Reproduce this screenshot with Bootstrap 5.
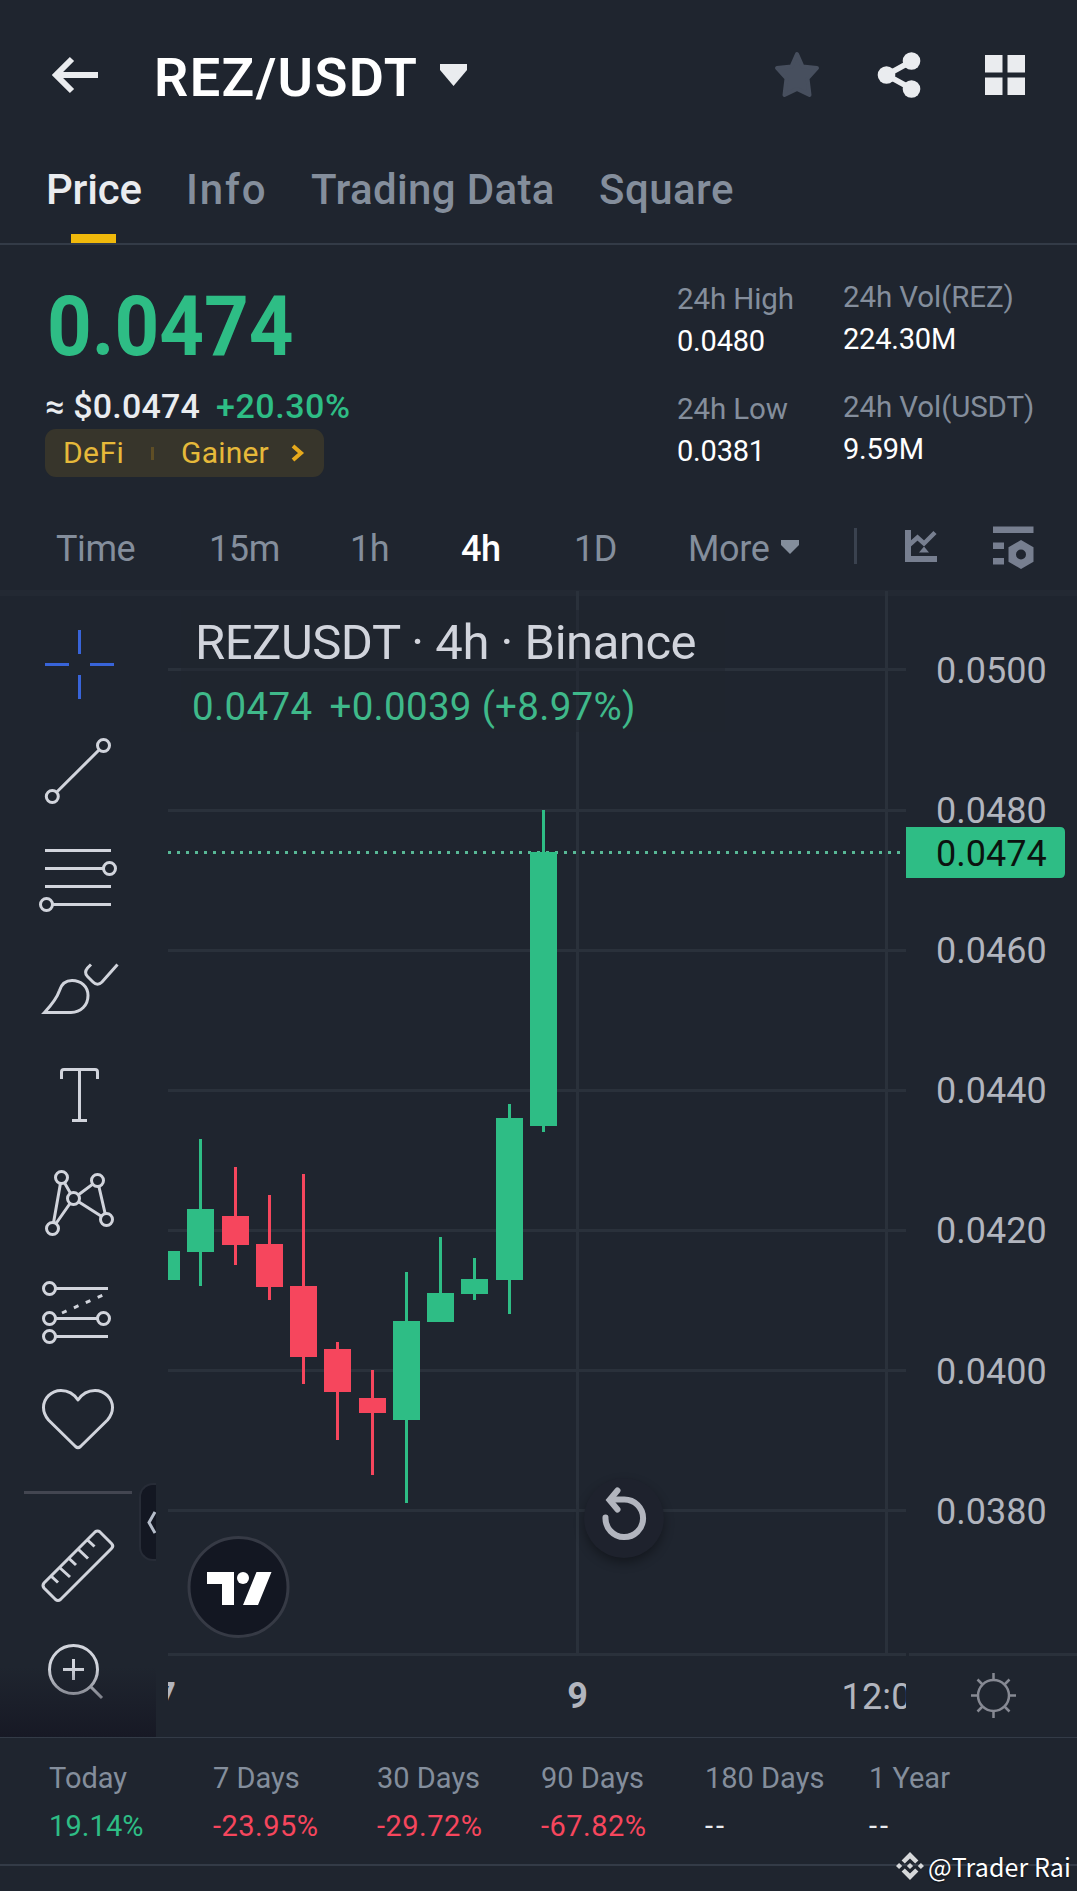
<!DOCTYPE html>
<html lang="en" data-bs-theme="dark">
<head>
<meta charset="utf-8">
<meta name="viewport" content="width=device-width, initial-scale=1">
<title>REZ/USDT</title>
<link href="https://cdn.jsdelivr.net/npm/bootstrap@5.3.0/dist/css/bootstrap.min.css" rel="stylesheet">
<style>
:root{--bg:#1f252f;--muted:#848e9c;--text:#eaecef;--up:#2ebd85;--down:#f6465d;--gold:#f0b90b;--rule:#333b47}
body{background:var(--bg);color:var(--text);font-family:Roboto,"Open Sans",sans-serif;width:1077px;height:1891px;overflow:hidden}
svg{display:block;flex:none}
.up{color:var(--up)}.down{color:var(--down)}.dim{color:var(--muted)}
.topbar{height:150px;padding-left:52px;padding-right:52px}
.pair{font-size:54px;font-weight:600;letter-spacing:1.4px;line-height:60px;margin:5px 0 0 6px;padding-left:49px;color:#fff}
.tabs-row{height:95px;padding-left:46px;border-bottom:2px solid var(--rule)}
.tabs-row .nav-link{font-size:42px;font-weight:500;line-height:50px;padding:15px 0 0;color:var(--muted);position:relative}
.tabs-row .nav-link.active{color:var(--text)}
.tabs-row .nav-link.active::after{content:"";position:absolute;left:25px;bottom:0;width:45px;height:9px;background:var(--gold)}
.summary{height:260px;padding-left:45px}
.last-col{width:630px;padding-top:40px}
.last-price{font-size:83px;font-weight:700;line-height:84px;transform:scaleX(.94);transform-origin:left;margin-left:2px}
.fiat-row{font-size:34px;font-weight:500;line-height:40px;margin-top:17px}
.tag-pill{width:279px;height:48px;border-radius:11px;background:#37352b;color:#e6b93a;font-size:30px;line-height:50px;margin-top:3px;padding-left:18px}
.tag-pill i{width:3px;height:13px;background:#5f4e25;margin:0 27px 0 27px}
.stat{font-size:29px}
.stat dt{font-size:29.5px;font-weight:400;line-height:40px;color:var(--muted);letter-spacing:-.1px}
.stat dd{line-height:45px;margin:0 0 25px;color:#fff;letter-spacing:-.2px}
.frames{height:91px;padding:3px 0 0 56px;border-bottom:6px solid #232933;font-size:36px;line-height:44px;color:var(--muted);letter-spacing:-.4px}
.frames span{flex:none}
.workspace{height:1141px}
.tools{width:156px;flex:none}
.fade-end{left:0;bottom:0;width:156px;height:70px;background:linear-gradient(rgba(23,25,37,0),#171925)}
.handle{left:139px;top:887px;width:17px;height:78px;background:#131722;border:2px solid #272c37;border-right:0;border-radius:14px 0 0 14px}
.periods{height:129px;border-top:1px solid var(--rule);border-bottom:2px solid var(--rule);padding:20px 0 0 49px;font-size:29px;line-height:40px}
.periods>div{width:164px;flex:none}
.periods .val{margin-top:8px;letter-spacing:.5px}
.credit{right:6px;bottom:11px;color:#fff;font:400 25px/28px "Noto Sans CJK SC","Open Sans",sans-serif;letter-spacing:.1px;text-shadow:0 1px 2px rgba(0,0,0,.6)}
.ln{fill:none;stroke:#d1d4dc;stroke-width:3}
.nd{fill:var(--bg);stroke:#d1d4dc;stroke-width:3}
</style>
</head>
<body>
<header class="topbar d-flex align-items-center">
  <svg width="47" height="38" viewBox="0 0 47 38"><path d="M20 3 4 19l16 16M4 19h42" fill="none" stroke="#eaecef" stroke-width="6"/></svg>
  <h1 class="pair mb-0">REZ/USDT</h1>
  <svg style="margin-left:22px" width="28" height="22" viewBox="0 0 28 22"><path d="M0 0h27v6L13.500 22 0 6z" fill="#eaecef"/></svg>
  <div class="d-flex align-items-center ms-auto">
    <svg width="46" height="48" viewBox="0 0 46 48"><path d="M23 3l5.500 12.500 14.500 1.500-9.500 10.500 2 16.500L23 38l-12.500 6 2-16.500L3 17l14.500-1.500z" fill="#474f5e" stroke="#474f5e" stroke-width="4" stroke-linejoin="round"/></svg>
    <svg style="margin-left:57px" width="44" height="46" viewBox="0 0 44 46"><path d="M35 9 9.500 23 35 37" fill="none" stroke="#eaecef" stroke-width="5.500"/><g fill="#eaecef"><circle cx="34.500" cy="9" r="8.800"/><circle cx="9.500" cy="23" r="8.800"/><circle cx="34.500" cy="37" r="8.800"/></g></svg>
    <svg style="margin-left:64px" width="40" height="40" viewBox="0 0 40 40"><path d="M0 0h17.500v17.500H0zM22.500 0H40v17.500H22.500zM0 22.500h17.500V40H0zM22.500 22.500H40V40H22.500z" fill="#eaecef"/></svg>
  </div>
</header>

<nav class="tabs-row nav flex-nowrap">
  <a class="nav-link active" style="width:140px;letter-spacing:-.200px">Price</a>
  <a class="nav-link" style="width:125px;letter-spacing:1.900px">Info</a>
  <a class="nav-link" style="width:288px;letter-spacing:.350px">Trading Data</a>
  <a class="nav-link" style="letter-spacing:.470px">Square</a>
</nav>

<section class="summary d-flex">
  <div class="last-col">
    <div class="last-price up">0.0474</div>
    <div class="fiat-row d-flex"><span style="width:171px;letter-spacing:.200px">≈ $0.0474</span><span class="up" style="letter-spacing:.550px">+20.30%</span></div>
    <div class="tag-pill d-flex align-items-center"><span style="letter-spacing:.400px">DeFi</span><i></i><span style="letter-spacing:.200px">Gainer</span>
      <svg style="margin-left:22px" width="14" height="18" viewBox="0 0 14 18"><path d="M2 2l8 7-8 7" fill="none" stroke="#e6a91c" stroke-width="4"/></svg></div>
  </div>
  <dl class="stat mb-0" style="width:166px;margin-left:2px;padding-top:34px">
    <dt>24h High</dt><dd>0.0480</dd><dt>24h Low</dt><dd>0.0381</dd>
  </dl>
  <dl class="stat mb-0" style="padding-top:32px">
    <dt>24h Vol(REZ)</dt><dd>224.30M</dd><dt>24h Vol(USDT)</dt><dd>9.59M</dd>
  </dl>
</section>

<nav class="frames d-flex align-items-center">
  <span style="width:153px">Time</span><span style="width:141px">15m</span><span style="width:111px">1h</span>
  <span style="width:113px;color:#fff;font-weight:500">4h</span><span style="width:114px">1D</span><span style="width:93px">More</span>
  <svg style="margin-top:-5px" width="18" height="14" viewBox="0 0 18 14"><path d="M0 0h18v5L9 14 0 5z" fill="#848e9c"/></svg>
  <svg style="margin-top:-6px" width="260" height="46" viewBox="799 523 260 46"><path d="M855.500 528v36" stroke="#3a424f" stroke-width="3"/>
    <g fill="#777f90"><path d="M905 530h6v26h26v6h-32zM919 552.500h10l-5-6z"/><path d="M908 546l9.500-8.500 6.500 6 11-11" fill="none" stroke="#777f90" stroke-width="4.500"/>
    <path d="M993 526.500h40.500v6.500H993zM993 542.500h11v6.500h-11zM993 558h11v6.500h-11z"/><path fill-rule="evenodd" d="M1021 540l12.500 7.200v14.600L1021 569l-12.500-7.200v-14.600zM1021 549.500a5 5 0 1 0 0 10 5 5 0 0 0 0-10z"/></g></svg>
</nav>

<main class="workspace d-flex position-relative">
  <aside class="tools d-flex flex-column">
    <svg width="156" height="122" viewBox="0 596 156 122"><path d="M79.500 630v24M79.500 675v24M45 664.500h24M90 664.500h24" stroke="#3864d9" stroke-width="3"/></svg>
    <svg width="156" height="106" viewBox="0 718 156 106"><path class="ln" d="M52.300 796.500l51.200-51"/><circle class="nd" cx="103.500" cy="745.500" r="6"/><circle class="nd" cx="52.300" cy="796.500" r="6"/></svg>
    <svg width="156" height="108" viewBox="0 824 156 108"><path class="ln" d="M45 850.500h66M45 868.500h60M45 886.500h66M48 904.500h63"/><circle class="nd" cx="109.500" cy="868.500" r="6"/><circle class="nd" cx="46.500" cy="904.500" r="6"/></svg>
    <svg width="156" height="108" viewBox="0 932 156 108"><path class="ln" d="M44.500 1012.500H71c10 0 17-7.500 17-17 0-9-7-15-16-15-7 0-11 5-12.500 10-2.500 7.500-9 15.500-15 22zM91 964.500l-3.500 3.500c-2.500 3-2.500 6 0 8.500l5.500 5.500c3 3 6 3 9 0l15.500-17.500"/></svg>
    <svg width="156" height="108" viewBox="0 1040 156 108"><path class="ln" d="M61.500 1079v-7q0-2.500 2.500-2.500h31q2.500 0 2.500 2.500v7M79.500 1069.500v51M72 1120.500h15"/></svg>
    <svg width="156" height="108" viewBox="0 1148 156 108"><path class="ln" d="M52.500 1228.500l9-51 12 21 24-18 9 39-33-21z"/><circle class="nd" cx="61.500" cy="1177.500" r="6"/><circle class="nd" cx="97.500" cy="1180.500" r="6"/><circle class="nd" cx="73.500" cy="1198.500" r="6"/><circle class="nd" cx="106.500" cy="1219.500" r="6"/><circle class="nd" cx="52.500" cy="1228.500" r="6"/></svg>
    <svg width="156" height="108" viewBox="0 1256 156 108"><path class="ln" d="M50 1288.500h58M50 1318.500h54M50 1336.500h58"/><path class="ln" d="M62 1313l42-18.500" stroke-dasharray="5 8"/><circle class="nd" cx="49.500" cy="1288.500" r="6"/><circle class="nd" cx="49.500" cy="1318.500" r="6"/><circle class="nd" cx="103.500" cy="1318.500" r="6"/><circle class="nd" cx="49.500" cy="1336.500" r="6"/></svg>
    <svg width="156" height="108" viewBox="0 1364 156 108"><path class="ln" stroke-linejoin="round" d="M78 1400c-4-6-10-9.500-17-9.500-10 0-17.500 8-17.500 17 0 6 2 9 5 12.500l27 26.500q2.500 2.200 5 0l27-26.500c3-3.500 5-6.500 5-12.500 0-9-7.500-17-17.500-17-7 0-13 3.500-17 9.500z"/></svg>
    <svg width="156" height="41" viewBox="0 1472 156 41"><path d="M24 1492.500h108" stroke="#434651" stroke-width="3"/></svg>
    <svg width="156" height="106" viewBox="0.500 1513 156 106"><path class="ln" d="M95.500 1532q2.500-2 5 0l11.500 11.500q2.500 2.500 0 5l-51 51q-2.500 2-5 0l-11.500-11.500q-2-2.500 0-5zM51.500 1576l7 6.500M60 1567.500l10.500 9.500M69 1558l7.500 7M78.500 1549l10 9.500M88 1540l7 6.500"/></svg>
    <svg width="156" height="118" viewBox="0 1619 156 118"><path class="ln" d="M63 1669.500h21M73.500 1659v21M91 1687l11 11"/><circle class="ln" cx="73.500" cy="1669.500" r="24"/></svg>
  </aside>
  <div class="fade-end position-absolute"></div>
  <div class="handle position-absolute"><svg width="15" height="74" viewBox="0 0 15 74"><path d="M14 27l-6 10.500 6 10.500" fill="none" stroke="#b5bdca" stroke-width="3"/></svg></div>

  <svg class="overflow-visible" width="921" height="1141" viewBox="156 596 921 1141" font-family="Roboto, sans-serif">
    <defs><clipPath id="plot"><rect x="168" y="596" width="738" height="1141"/></clipPath>
    <filter id="soft" x="-50%" y="-50%" width="200%" height="200%"><feGaussianBlur stdDeviation="6"/></filter></defs>
    <g stroke="#2a313b" stroke-width="3">
      <path d="M577.500 591v1063M886.500 591v1063M168 669.500h738M168 810.500h738M168 950.500h738M168 1090.500h738M168 1230.500h738M168 1370.500h738M168 1510.500h738M168 1654.500h738M909 1654.500h168"/>
    </g>
    <rect x="181" y="610" width="544" height="122" fill="#1f252f" opacity=".45"/>
    <path d="M168 852.500h738" stroke="#58b896" stroke-width="3" stroke-dasharray="3 6"/>
    <g clip-path="url(#plot)">
      <g fill="#2ebd85">
        <path d="M153 1251h27v29h-27zM187 1209h27v43h-27zM393 1321h27v99h-27zM427 1293h27v29h-27zM461 1279h27v15h-27zM496 1118h27v162h-27zM530 852h27v274h-27z"/>
        <path d="M199 1139h3v147h-3zM405 1272h3v231h-3zM439 1237h3v60h-3zM473 1258h3v42h-3zM508 1104h3v210h-3zM542 810h3v322h-3z"/>
      </g>
      <g fill="#f6465d">
        <path d="M222 1216h27v29h-27zM256 1244h27v43h-27zM290 1286h27v71h-27zM324 1349h27v43h-27zM359 1398h27v15h-27z"/>
        <path d="M234 1167h3v98h-3zM268 1195h3v105h-3zM302 1174h3v210h-3zM336 1342h3v98h-3zM371 1370h3v105h-3z"/>
      </g>
      <g fill="#b2b5be" font-size="36">
        <text x="165.500" y="1708" text-anchor="middle" font-weight="700">7</text>
        <text x="577.500" y="1708" text-anchor="middle" font-weight="700">9</text>
        <text x="841.500" y="1708.500" letter-spacing=".2">12:00</text>
      </g>
    </g>
    <text x="195" y="659" font-size="49" letter-spacing="-.48" fill="#d1d4dc">REZUSDT · 4h · Binance</text>
    <g font-size="38.500" fill="#3fb98a"><text x="192" y="719.500" letter-spacing=".36">0.0474</text><text x="329.500" y="719.500" letter-spacing=".3">+0.0039 (+8.97%)</text></g>
    <g font-size="36" fill="#b2b5be">
      <text x="936" y="683">0.0500</text><text x="936" y="823">0.0480</text><text x="936" y="963">0.0460</text><text x="936" y="1103">0.0440</text><text x="936" y="1243">0.0420</text><text x="936" y="1383.500">0.0400</text><text x="936" y="1523.500">0.0380</text>
      <path d="M906 827h154q5 0 5 5v41q0 5-5 5H906z" fill="#2ebd85"/><text x="936" y="866" fill="#0b120f">0.0474</text>
    </g>
    <circle cx="238.500" cy="1587" r="49.500" fill="#131722" stroke="#363a45" stroke-width="3"/>
    <path d="M207 1572h27v33h-12v-21h-15zM256.500 1572h15l-13.500 33h-15z" fill="#fff"/><circle cx="243" cy="1578" r="6" fill="#fff"/>
    <circle cx="624" cy="1523" r="39" fill="#000" opacity=".4" filter="url(#soft)"/><circle cx="624" cy="1518" r="40" fill="#1e222d"/>
    <g fill="none" stroke="#b2b5be" stroke-width="6" stroke-linecap="round"><path d="M605.500 1517.500A18.800 18.800 0 1 0 624 1499.500H611"/><path d="M617.500 1490.500l-8 9.500 8 9.500"/></g>
    <g fill="none" stroke="#868993" stroke-width="2.500"><circle cx="993.500" cy="1695.500" r="15.500"/><path d="M993.500 1680v-7M993.500 1711v7M978 1695.500h-7M1009 1695.500h7M982.500 1684.500l-5-5M1004.500 1684.500l5-5M982.500 1706.500l-5 5M1004.500 1706.500l5 5"/></g>
  </svg>
</main>

<footer class="periods d-flex">
  <div><div class="dim">Today</div><div class="val up" style="letter-spacing:.100px">19.14%</div></div>
  <div><div class="dim">7 Days</div><div class="val down">-23.95%</div></div>
  <div><div class="dim">30 Days</div><div class="val down">-29.72%</div></div>
  <div><div class="dim">90 Days</div><div class="val down">-67.82%</div></div>
  <div><div class="dim">180 Days</div><div class="val" style="letter-spacing:3px">--</div></div>
  <div><div class="dim">1 Year</div><div class="val" style="letter-spacing:3px">--</div></div>
</footer>
<div class="credit position-absolute d-flex align-items-center">
  <svg class="me-1" width="28" height="28" viewBox="0 0 28 28" fill="#d6d8da"><path d="M14 0l8.400 8.400-3.200 3.200L14 6.400l-5.200 5.200-3.200-3.200zM14 28l8.400-8.400-3.200-3.200L14 21.600l-5.200-5.200-3.200 3.200zM3.100 10.900L6.200 14l-3.100 3.100L0 14zM14 10.900l3.100 3.100-3.100 3.100-3.100-3.100zM24.900 10.900L28 14l-3.100 3.100-3.100-3.100z"/></svg>
  <span>@Trader Rai</span>
</div>
<script src="https://cdn.jsdelivr.net/npm/bootstrap@5.3.0/dist/js/bootstrap.bundle.min.js"></script>
</body>
</html>
